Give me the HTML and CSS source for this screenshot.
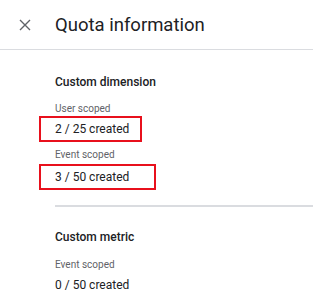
FILE: index.html
```html
<!DOCTYPE html>
<html>
<head>
<meta charset="utf-8">
<link rel="stylesheet" href="styles.css">
</head>
<body>
<div class="header">
  <svg class="close" width="12" height="12" viewBox="0 0 12 12"><path d="M1 1L11 11M11 1L1 11" stroke="#5f6368" stroke-width="1.4" fill="none"/></svg>
  <div class="title">Quota information</div>
</div>
<div class="content">
  <div class="section first">
    <div class="heading">Custom dimension</div>
    <div class="label">User scoped</div>
    <div class="value boxed box-a">2 / 25 created</div>
    <div class="label gap">Event scoped</div>
    <div class="value boxed box-b">3 / 50 created</div>
  </div>
  <div class="divider"></div>
  <div class="section second">
    <div class="heading">Custom metric</div>
    <div class="label">Event scoped</div>
    <div class="value plain">0 / 50 created</div>
  </div>
</div>
</body>
</html>
```
FILE: styles.css
```css
html, body { margin: 0; padding: 0; background: #fff; }
body { font-family: Roboto, "Liberation Sans", sans-serif; color: #202124; width: 313px; height: 300px; overflow: hidden; }
.header { display: flex; align-items: center; height: 50px; border-bottom: 1px solid #dadce0; box-sizing: border-box; }
.close { margin-left: 19px; margin-right: 24px; }
.title { font-size: 18.5px; color: #202124; }
.content { padding-left: 55px; }
.section.first { padding-top: 23px; }
.section.second { padding-top: 21px; }
.heading { font-size: 12px; font-weight: 500; line-height: 18px; color: #202124; margin-bottom: 10px; }
.second .heading { margin-bottom: 11px; }
.label { font-size: 10px; line-height: 15px; color: #5f6368; }
.label.gap { margin-top: 5px; }
.value { font-size: 12px; line-height: 22px; color: #202124; }
.value.plain { margin-top: 2px; }
.boxed { margin-left: -16px; padding-left: 14px; border: 2px solid #e8101c; box-sizing: border-box; }
.box-a { width: 103px; }
.box-b { width: 117px; margin-top: 2px; }
.divider { height: 2px; background: #dadce0; margin-top: 15px; }
```
